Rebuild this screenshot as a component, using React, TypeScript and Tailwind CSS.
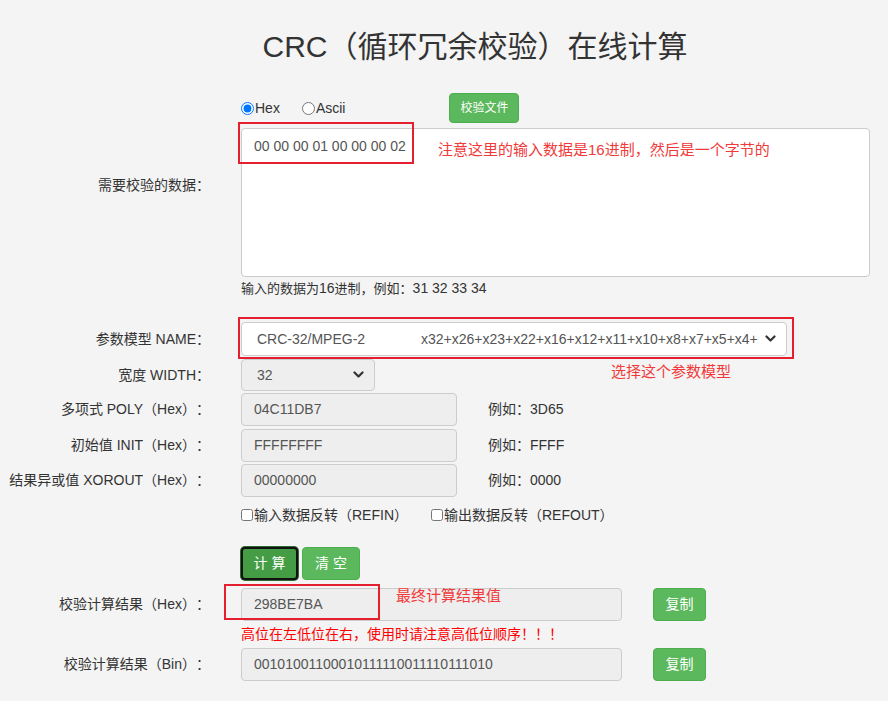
import * as React from 'react';

const FONT = "font-['Liberation_Sans','Noto_Sans_CJK_SC',sans-serif] [text-spacing-trim:space-all]";

function Chevron() {
  return (
    <svg width="11" height="8" viewBox="0 0 11 8" className="shrink-0">
      <path d="M1.5 1.5 L5.5 5.5 L9.5 1.5" fill="none" stroke="#333" strokeWidth="2.2" strokeLinecap="round" strokeLinejoin="round" />
    </svg>
  );
}

function Row(props: { label?: string; className?: string; children: React.ReactNode }) {
  return (
    <div className={`flex items-center ${props.className ?? ''}`}>
      <div className="w-[210px] shrink-0 text-right text-[14px] text-[#333]">{props.label}</div>
      <div className="ml-[31px] flex h-full items-center">{props.children}</div>
    </div>
  );
}

function GreyInput(props: { value: string; width: string }) {
  return (
    <div
      className={`flex h-full items-center rounded-[4px] border border-[#ccc] bg-[#eee] pl-[12px] text-[14px] text-[#555] ${props.width}`}
    >
      {props.value}
    </div>
  );
}

function GreenBtn(props: { children: React.ReactNode; className?: string }) {
  return (
    <button
      type="button"
      className={`flex items-center justify-center rounded-[4px] border border-[#4cae4c] bg-[#5cb85c] text-white ${props.className ?? ''}`}
    >
      {props.children}
    </button>
  );
}

export default function App() {
  return (
    <div className={`relative min-h-screen bg-[#f4f4f4] pb-6 ${FONT}`}>
      <h1 className="pl-[62px] pt-[28px] text-center text-[30px] leading-[38px] text-[#333]">
        CRC（循环冗余校验）在线计算
      </h1>

      {/* input type + file button */}
      <Row className="mt-[27px] h-[30px]">
        <label className="flex items-center text-[14px] text-[#333]">
          <input type="radio" name="t" defaultChecked className="m-0 h-[13px] w-[13px]" />
          <span className="ml-[1px]">Hex</span>
        </label>
        <label className="ml-[22px] flex items-center text-[14px] text-[#333]">
          <input type="radio" name="t" className="m-0 h-[13px] w-[13px]" />
          <span className="ml-[1px]">Ascii</span>
        </label>
        <GreenBtn className="ml-[104px] h-[30px] w-[70px] text-[12px]">校验文件</GreenBtn>
      </Row>

      {/* data textarea */}
      <div className="mt-[5px] flex h-[149px]">
        <div className="w-[210px] shrink-0 pt-[47px] text-right text-[14px] text-[#333]">需要校验的数据：</div>
        <div className="ml-[31px] h-full w-[629px] rounded-[4px] border border-[#ccc] bg-white pl-[12px] pt-[7px] text-[14px] leading-[20px] text-[#555]">
          00 00 00 01 00 00 00 02
        </div>
      </div>
      <div className="ml-[241px] mt-[2px] h-[18px] text-[13px] leading-[18px] text-[#333]">
        输入的数据为<span className="text-[14px] leading-[18px]">16</span>进制，例如：
        <span className="text-[14px] leading-[18px]">31 32 33 34</span>
      </div>

      {/* model */}
      <Row label="参数模型 NAME：" className="mt-[25px] h-[34px]">
        <div className="flex h-full w-[546px] items-center rounded-[4px] border border-[#ccc] bg-white pl-[15px] pr-[10px] text-[14px] text-[#555]">
          <span className="w-[164px]">CRC-32/MPEG-2</span>
          <span className="flex-1">x32+x26+x23+x22+x16+x12+x11+x10+x8+x7+x5+x4+</span>
          <Chevron />
        </div>
      </Row>
      <Row label="宽度 WIDTH：" className="mt-[3px] h-[32px]">
        <div className="flex h-full w-[134px] items-center justify-between rounded-[4px] border border-[#ccc] bg-[#eee] pl-[15px] pr-[10px] text-[14px] text-[#555]">
          <span>32</span>
          <Chevron />
        </div>
      </Row>
      <Row label="多项式 POLY（Hex）：" className="mt-[2px] h-[33px]">
        <GreyInput value="04C11DB7" width="w-[216px]" />
        <span className="ml-[31px] text-[14px] text-[#333]">例如：3D65</span>
      </Row>
      <Row label="初始值 INIT（Hex）：" className="mt-[3px] h-[33px]">
        <GreyInput value="FFFFFFFF" width="w-[216px]" />
        <span className="ml-[31px] text-[14px] text-[#333]">例如：FFFF</span>
      </Row>
      <Row label="结果异或值 XOROUT（Hex）：" className="mt-[2px] h-[33px]">
        <GreyInput value="00000000" width="w-[216px]" />
        <span className="ml-[31px] text-[14px] text-[#333]">例如：0000</span>
      </Row>

      {/* reflect options */}
      <Row className="mt-[8px] h-[20px]">
        <label className="flex w-[190px] items-center text-[14px] text-[#333]">
          <input type="checkbox" className="m-0 h-[12px] w-[12px]" />
          <span className="ml-[1px]">输入数据反转（REFIN）</span>
        </label>
        <label className="flex items-center text-[14px] text-[#333]">
          <input type="checkbox" className="m-0 h-[12px] w-[12px]" />
          <span className="ml-[1px]">输出数据反转（REFOUT）</span>
        </label>
      </Row>

      {/* actions */}
      <Row className="mt-[22px] h-[33px]">
        <button
          type="button"
          className="flex h-[33px] w-[57px] items-center justify-center rounded-[4px] border-2 border-[#111] bg-[#449d44] text-[14px] text-white shadow-[0_0_0_1px_#2d6a2d]"
        >
          计 算
        </button>
        <GreenBtn className="ml-[4px] h-[33px] w-[58px] text-[14px]">清 空</GreenBtn>
      </Row>

      <Row label="校验计算结果（Hex）：" className="mt-[8px] h-[33px]">
        <GreyInput value="298BE7BA" width="w-[381px]" />
        <GreenBtn className="ml-[31px] h-[33px] w-[53px] text-[14px]">复制</GreenBtn>
      </Row>
      <div className="ml-[241px] mt-[3px] text-[14px] leading-[20px] text-[#ff0000]">
        高位在左低位在右，使用时请注意高低位顺序！！！
      </div>
      <Row label="校验计算结果（Bin）：" className="mt-[4px] h-[33px]">
        <GreyInput value="00101001100010111110011110111010" width="w-[381px]" />
        <GreenBtn className="ml-[31px] h-[33px] w-[53px] text-[14px]">复制</GreenBtn>
      </Row>

      {/* annotations drawn over the screenshot */}
      <div className="pointer-events-none absolute left-[238px] top-[122px] h-[42px] w-[176px] border-2 border-[#e5202e]" />
      <div className="pointer-events-none absolute left-[238px] top-[317px] h-[42px] w-[556px] border-2 border-[#e5202e]" />
      <div className="pointer-events-none absolute left-[224px] top-[584px] h-[36px] w-[156px] border-2 border-[#e5202e]" />
      <div className="absolute left-[438px] top-[140px] text-[15px] leading-[20px] text-[#f03a3a]">
        注意这里的输入数据是16进制，然后是一个字节的
      </div>
      <div className="absolute left-[611px] top-[362px] text-[15px] leading-[20px] text-[#f03a3a]">选择这个参数模型</div>
      <div className="absolute left-[396px] top-[586px] text-[15px] leading-[20px] text-[#f03a3a]">最终计算结果值</div>
    </div>
  );
}
